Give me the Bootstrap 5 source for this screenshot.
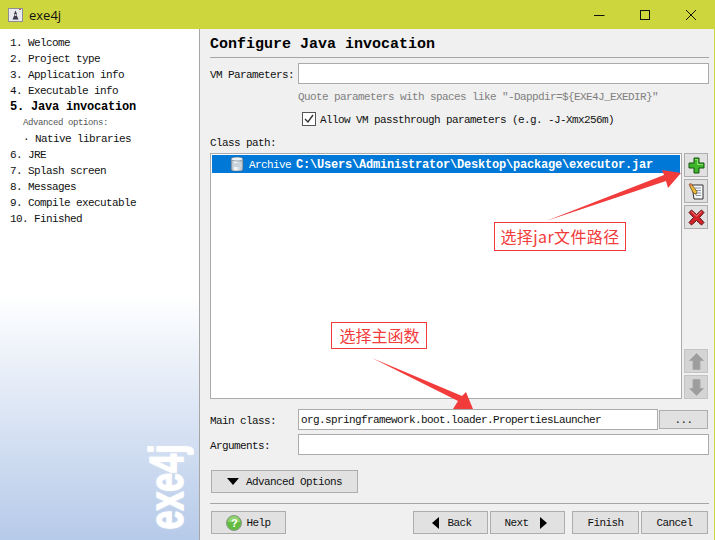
<!DOCTYPE html>
<html lang="en">
<head>
<meta charset="utf-8">
<title>exe4j</title>
<link href="https://cdn.jsdelivr.net/npm/bootstrap@5.3.0/dist/css/bootstrap.min.css" rel="stylesheet">
<style>
html,body{margin:0;height:540px;overflow:hidden;background:#f0f0f0}
body{font-family:"Liberation Mono",monospace;font-size:11px;letter-spacing:-.6px;color:#111;line-height:16px}
.win{width:715px;height:540px;border-right:1px solid #cdd63d;position:relative}
.tbar{height:29px;background:#cdd63d;flex:none}
.ttl{font-family:"Open Sans",sans-serif;font-size:13px;letter-spacing:0;margin-left:6px;color:#111}
.tico{margin-left:8px}
.wbtns{margin-left:auto;gap:30px;padding-right:15px}
.body-area{height:511px}
.side{width:200px;flex:none;border-right:1px solid #a6a6a6;padding:6px 0 0 10px;position:relative;
 background:linear-gradient(180deg,#fff 0,#fff 265px,#b6cae9 511px)}
.step{height:16px;white-space:pre}
.step-on{font-weight:700;font-size:12px;letter-spacing:-.2px;color:#000}
.step-sub{padding-left:13px}
.step-cap{padding-left:13px;font-size:9px;letter-spacing:-.4px;color:#555}
.logo{position:absolute;left:121px;top:442px;margin-top:-29px;width:85px;height:34px;
 font:700 34px/34px "Liberation Sans",sans-serif;letter-spacing:0;color:#fff;white-space:nowrap;text-align:center;
 -webkit-text-stroke:1px #fff;
 transform-origin:center;transform:translate(2px,28px) rotate(-90deg) scaleY(1.42);text-shadow:0 0 2px rgba(255,255,255,.8)}
.pane{width:514px;flex:none;padding:0 5px 0 10px}
.ptitle{height:29px;border-bottom:1px solid #a6a6a6;font-weight:700;font-size:15px;letter-spacing:0;line-height:32px;color:#000}
.flabel{width:88px;flex:none;padding-top:2px}
.fld.form-control{height:21px;min-height:21px;padding:1px 2px 0;border:1px solid #ababab;border-radius:0;
 font:inherit;font-size:11px;letter-spacing:-.6px;background:#fff;color:#111;box-shadow:none}
.r-vm{margin-top:5px}
.hint{height:24px;line-height:26px;margin-left:88px;color:#808080}
.chk{height:22px;margin-left:92px}
.chk span{padding-top:2px;margin-left:-2px}
.chk .form-check-input{width:14px;height:14px;margin:0 6px 0 0;border:1px solid #555;border-radius:0;background-color:#fff;flex:none;
 background-image:url("data:image/svg+xml,%3Csvg xmlns='http://www.w3.org/2000/svg' viewBox='0 0 14 14'%3E%3Cpath d='M3 7l3 3 5-7' fill='none' stroke='%23333' stroke-width='1.4'/%3E%3C/svg%3E");background-size:14px}
.cplabel{height:22px;line-height:24px;margin-top:1px}
.cprow{height:246px}
.cplist.list-group{width:472px;border:1px solid #ababab;border-radius:0;background:#fff;padding:1px;display:block;flex:none}
.cpitem.list-group-item{height:18px;border:0;border-radius:0;background:#0078d7;color:#fff;padding:0 0 0 18px;gap:5px;line-height:18px}
.cpitem>span{padding-top:2px}
.cpath{font-weight:700;font-size:12px;letter-spacing:-.2px;margin-left:-1px}
.tools{width:24px;margin-left:2px;gap:2px}
.tbtn.btn{width:24px;height:24px;padding:0;border:1px solid #adadad;border-radius:0;background:#e1e1e1;--bs-btn-hover-bg:#e1e1e1}
.tbtn.btn:disabled{opacity:1;background:#d4d4d4;border-color:#c4c4c4}
.r-main{margin-top:10px}
.r-args{margin-top:4px}
.mc{width:360px;flex:none!important}
.pbtn.btn{height:23px;padding:2px 0 0;border:1px solid #adadad;border-radius:0;background:#e1e1e1;color:#111;
 font:inherit;font-size:11px;letter-spacing:-.6px;line-height:1;--bs-btn-hover-bg:#e1e1e1}
.dots.btn{width:49px;height:19px;margin-left:1px}
.adv.btn{width:147px;margin:15px 0 0 1px;gap:7px}
.pbtn svg{margin-top:-2px}
.sep{height:1px;background:#a6a6a6;margin-top:10px}
.foot{margin-top:7px;padding-left:1px}
.fb1{width:75px}.fb2{width:67px}
.bk.btn{gap:8px;margin-left:auto;padding-left:3px}
.nx.btn{gap:11px;margin-left:2px;padding-right:4px}
.fnote{position:absolute;border:1px solid #f23b3b;background:#fff;color:#f23b3b;font:400 16px/1 "Noto Sans CJK SC",sans-serif;letter-spacing:0;text-align:center;white-space:nowrap}
.n1{left:494px;top:222px;width:132px;height:29px;line-height:27px;letter-spacing:.4px}
.n2{left:331px;top:322px;width:96px;height:27px;line-height:25px;padding-left:1px}
.arrows{position:absolute;left:0;top:0;pointer-events:none}
</style>
</head>
<body>
<div class="win d-flex flex-column">
  <div class="tbar d-flex align-items-center">
    <svg class="tico" width="15" height="14" viewBox="0 0 15 14"><rect x=".5" y=".5" width="14" height="13" fill="#e9e9ee" stroke="#8d8d96"/><path d="M7.5 2.5L9 6v2l1.5 3.5h-6L6 8V6z" fill="#3a3a48"/><rect x="6.5" y="6" width="2" height="2" fill="#c9c9d4"/><rect x="11" y="1" width="2" height="1" fill="#c44"/></svg>
    <span class="ttl">exe4j</span>
    <div class="wbtns d-flex align-items-center">
      <svg width="16" height="12" viewBox="0 0 16 12"><path d="M3 6.5h10.5" stroke="#111"/></svg>
      <svg width="16" height="12" viewBox="0 0 16 12"><rect x="3.5" y="1.5" width="9" height="9" fill="none" stroke="#111"/></svg>
      <svg width="16" height="12" viewBox="0 0 16 12"><path d="M3 1l10 10M13 1L3 11" stroke="#111" fill="none"/></svg>
    </div>
  </div>
  <div class="body-area d-flex">
    <aside class="side">
      <div class="step">1. Welcome</div>
      <div class="step">2. Project type</div>
      <div class="step">3. Application info</div>
      <div class="step">4. Executable info</div>
      <div class="step step-on">5. Java invocation</div>
      <div class="step step-cap">Advanced options:</div>
      <div class="step step-sub">· Native libraries</div>
      <div class="step">6. JRE</div>
      <div class="step">7. Splash screen</div>
      <div class="step">8. Messages</div>
      <div class="step">9. Compile executable</div>
      <div class="step">10. Finished</div>
      <div class="logo">exe4j</div>
    </aside>
    <main class="pane">
      <div class="ptitle">Configure Java invocation</div>
      <div class="r-vm d-flex align-items-center">
        <label class="flabel">VM Parameters:</label>
        <input class="fld form-control" type="text">
      </div>
      <div class="hint">Quote parameters with spaces like "-Dappdir=${EXE4J_EXEDIR}"</div>
      <div class="chk d-flex align-items-center">
        <input class="form-check-input" type="checkbox" checked>
        <span>Allow VM passthrough parameters (e.g. -J-Xmx256m)</span>
      </div>
      <div class="cplabel">Class path:</div>
      <div class="cprow d-flex">
        <div class="cplist list-group">
          <div class="cpitem list-group-item d-flex align-items-center">
            <svg width="14" height="16" viewBox="0 0 14 16"><defs><linearGradient id="jr" x1="0" x2="1"><stop offset="0" stop-color="#8fa2b4"/><stop offset=".35" stop-color="#fff"/><stop offset="1" stop-color="#a9b6c4"/></linearGradient></defs><rect x="1" y="2" width="12" height="13" rx="2" fill="url(#jr)" stroke="#56687a" stroke-width=".6"/><ellipse cx="7" cy="3" rx="6" ry="2" fill="#eef3f7" stroke="#56687a" stroke-width=".6"/><rect x="4" y="7" width="8" height="4" fill="#c9d3dc"/></svg>
            <span>Archive <span class="cpath">C:\Users\Administrator\Desktop\package\executor.jar</span></span>
          </div>
        </div>
        <div class="tools d-flex flex-column">
          <button class="tbtn btn d-flex align-items-center justify-content-center" type="button" aria-label="Add">
            <svg width="17" height="17" viewBox="0 0 17 17"><path d="M6 1h5v5h5v5h-5v5H6v-5H1V6h5z" fill="#3fb52a" stroke="#14520f"/><path d="M7 2h3v5h5v1H9V3H7z" fill="#8fe36d"/></svg>
          </button>
          <button class="tbtn btn d-flex align-items-center justify-content-center" type="button" aria-label="Edit">
            <svg width="17" height="17" viewBox="0 0 17 17"><path d="M4 2h11v14H6z" fill="#f5f6f7" stroke="#333"/><path d="M7 5h6M7 7.5h6M8 10h5M8 12.5h5" stroke="#8a96a6"/><path d="M1 1.5l2-1 6 8-1 3-3-2z" fill="#e8b73a" stroke="#5a3f12" stroke-width=".7"/><path d="M1 1.5l2-1 1 1.4-2 1z" fill="#d96a5e"/></svg>
          </button>
          <button class="tbtn btn d-flex align-items-center justify-content-center" type="button" aria-label="Remove">
            <svg width="17" height="17" viewBox="0 0 17 17"><path d="M3.5 1L8.5 5.5 13.5 1 16 3.5 11.5 8.5 16 13.5 13.5 16 8.5 11.5 3.5 16 1 13.5 5.5 8.5 1 3.5z" fill="#d2232a" stroke="#5e1518"/><path d="M3.5 2.5L8.5 7l5-4.5" fill="none" stroke="#ef8a8a"/></svg>
          </button>
          <button class="tbtn btn d-flex align-items-center justify-content-center mt-auto" type="button" aria-label="Up" disabled>
            <svg width="15" height="17" viewBox="0 0 15 17"><path d="M7.5 0.5L14.5 7.5H11V16.5H4V7.5H.5z" fill="#9d9d9d" stroke="#a8a8a8"/></svg>
          </button>
          <button class="tbtn btn d-flex align-items-center justify-content-center" type="button" aria-label="Down" disabled>
            <svg width="15" height="17" viewBox="0 0 15 17"><path d="M7.5 16.5L14.5 9.5H11V.5H4V9.5H.5z" fill="#9d9d9d" stroke="#a8a8a8"/></svg>
          </button>
        </div>
      </div>
      <div class="r-main d-flex align-items-center">
        <label class="flabel">Main class:</label>
        <input class="fld form-control mc" type="text" value="org.springframework.boot.loader.PropertiesLauncher">
        <button class="pbtn dots btn" type="button">...</button>
      </div>
      <div class="r-args d-flex align-items-center">
        <label class="flabel">Arguments:</label>
        <input class="fld form-control" type="text">
      </div>
      <button class="pbtn adv btn d-flex align-items-center justify-content-center" type="button">
        <svg width="12" height="7" viewBox="0 0 12 7"><path d="M0 0h12L6 7z" fill="#000"/></svg>Advanced Options
      </button>
      <div class="sep"></div>
      <div class="foot d-flex">
        <button class="pbtn fb1 btn d-flex align-items-center justify-content-center gap-1" type="button">
          <svg width="16" height="16" viewBox="0 0 16 16"><circle cx="8" cy="8" r="7.5" fill="#63bb3f" stroke="#8a9a8a"/><path d="M2 7a6 6 0 0 1 12 0z" fill="#a5dd83" opacity=".7"/><text x="8" y="12" text-anchor="middle" font-family="Liberation Sans" font-weight="700" font-size="11" fill="#fff">?</text></svg>Help
        </button>
        <button class="pbtn fb1 bk btn d-flex align-items-center justify-content-center" type="button">
          <svg width="7" height="12" viewBox="0 0 7 12"><path d="M7 0v12L0 6z" fill="#000"/></svg>Back
        </button>
        <button class="pbtn fb1 nx btn d-flex align-items-center justify-content-center" type="button">
          Next<svg width="7" height="12" viewBox="0 0 7 12"><path d="M0 0v12l7-6z" fill="#000"/></svg>
        </button>
        <button class="pbtn fb2 btn ms-2" type="button" style="margin-left:7px!important">Finish</button>
        <button class="pbtn fb2 btn" type="button" style="margin:0 1px 0 2px">Cancel</button>
      </div>
    </main>
  </div>
  <svg class="arrows" width="715" height="540" viewBox="0 0 715 540">
    <path d="M546 221L664 175 662 170 681 173 668 188 666 181z" fill="#f23b3b"/>
    <path d="M372 358L462 396 466 392 473 409H453L458 401z" fill="#f23b3b"/>
  </svg>
  <div class="fnote n1">选择jar文件路径</div>
  <div class="fnote n2">选择主函数</div>
</div>
<script src="https://cdn.jsdelivr.net/npm/bootstrap@5.3.0/dist/js/bootstrap.bundle.min.js"></script>
</body>
</html>
